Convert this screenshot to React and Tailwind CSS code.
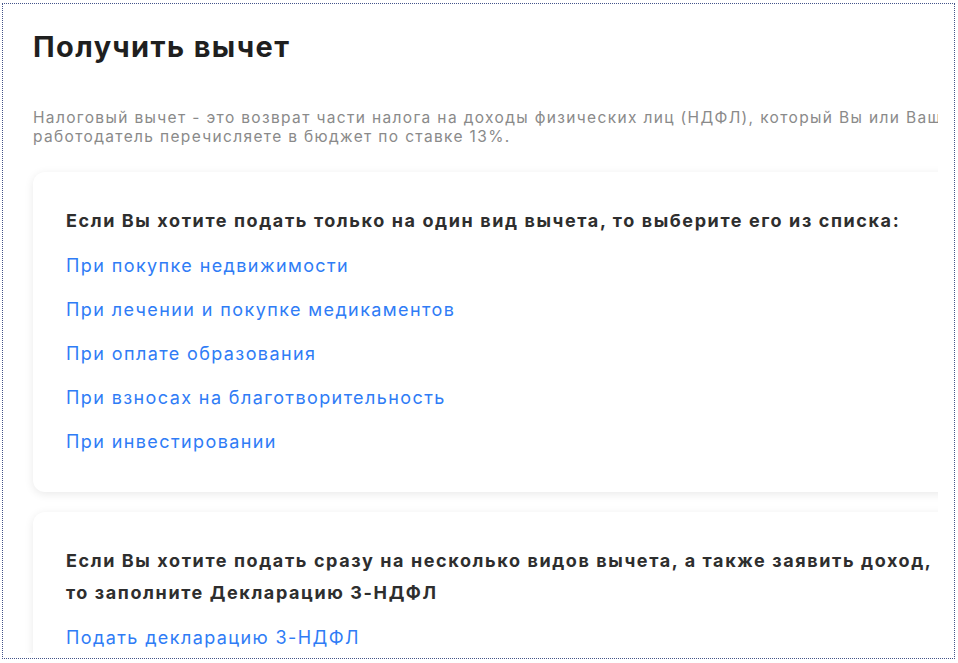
import React from "react";

const links = [
  "При покупке недвижимости",
  "При лечении и покупке медикаментов",
  "При оплате образования",
  "При взносах на благотворительность",
  "При инвестировании",
];

export default function App() {
  return (
    <div className="w-[958px] h-[663px] bg-white pt-[3px] pl-[2px] overflow-hidden" style={{ fontFamily: "Inter, Roboto, sans-serif" }}>
      <div className="w-[953px] h-[656px] border border-dotted border-[#44548a]">
        <div className="w-[935px] h-[649px] overflow-hidden">
          <div className="w-[1100px] pl-[30px] pt-[26px]">
            <h1 className="text-[29px] leading-[34px] tracking-[1.4px] font-bold text-[#1f1f1f]">Получить вычет</h1>
            <p className="mt-[44px] w-[960px] text-[15.5px] leading-[19px] tracking-[1.35px] text-[#8a8a8a]">
              Налоговый вычет - это возврат части налога на доходы физических лиц (НДФЛ), который Вы или Ваш работодатель перечисляете в бюджет по ставке 13%.
            </p>
            <div className="mt-[26px] flex flex-col gap-[20px]">
              <div className="w-[1000px] rounded-[12px] bg-white px-[33px] pt-[33px] pb-[28px] shadow-[0_2px_10px_rgba(0,0,0,0.09)]">
                <div className="text-[18px] leading-[32px] tracking-[1.6px] font-bold text-[#2e2e2e] mb-[7px]">
                  Если Вы хотите подать только на один вид вычета, то выберите его из списка:
                </div>
                <div className="flex flex-col">
                  {links.map((l) => (
                    <a key={l} className="text-[18px] leading-[44px] tracking-[1.4px] text-[#2f7cf6] w-fit">{l}</a>
                  ))}
                </div>
              </div>
              <div className="w-[1000px] rounded-[12px] bg-white px-[33px] pt-[33px] pb-[28px] shadow-[0_2px_10px_rgba(0,0,0,0.09)]">
                <div className="text-[18px] leading-[32px] tracking-[1.6px] font-bold text-[#2e2e2e] mb-[7px]">
                  Если Вы хотите подать сразу на несколько видов вычета, а также заявить доход,<br />то заполните Декларацию 3-НДФЛ
                </div>
                <a className="block text-[18px] leading-[44px] tracking-[1.4px] text-[#2f7cf6] w-fit">Подать декларацию 3-НДФЛ</a>
              </div>
            </div>
          </div>
        </div>
      </div>
    </div>
  );
}
